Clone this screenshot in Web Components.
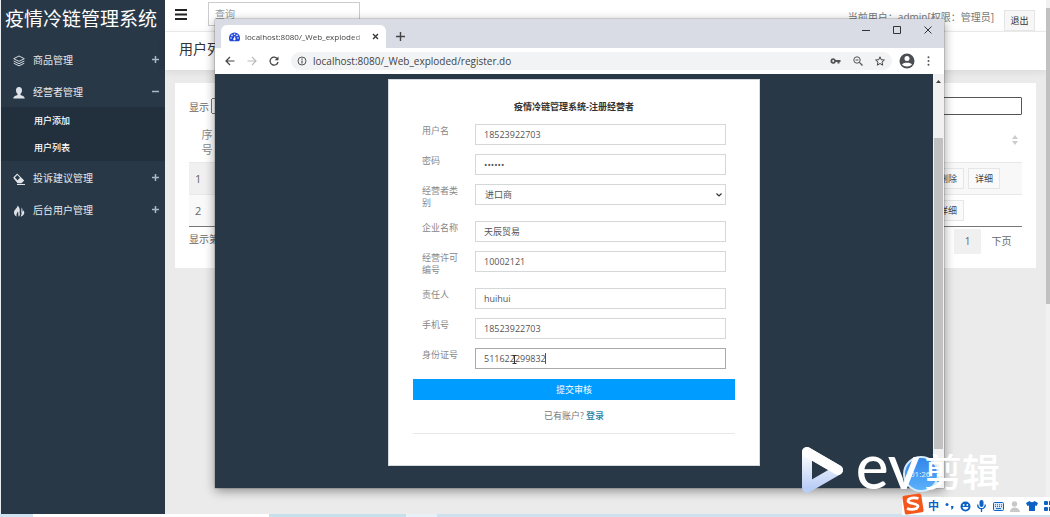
<!DOCTYPE html>
<html lang="zh-CN">
<head>
<meta charset="utf-8">
<title>疫情冷链管理系统</title>
<style>
html,body{margin:0;height:100%}
body{font-family:"Open Sans","Noto Sans CJK SC",sans-serif;font-size:10px;color:#666;overflow:hidden}
</style>
</head>
<body>
<desk-top>
  <admin-app>
    <side-bar slot="side">
      <menu-item label="商品管理" icon="layers"></menu-item>
      <menu-item label="经营者管理" icon="user" open>
        <a-sub label="用户添加"></a-sub>
        <a-sub label="用户列表"></a-sub>
      </menu-item>
      <menu-item label="投诉建议管理" icon="eraser"></menu-item>
      <menu-item label="后台用户管理" icon="fire"></menu-item>
    </side-bar>
    <top-bar></top-bar>
    <page-title>用户列表</page-title>
    <user-table></user-table>
  </admin-app>
  <browser-window slot="float">
    <register-card>
      <form-field label="用户名" value="18523922703"></form-field>
      <form-field label="密码" type="password" value="123456"></form-field>
      <form-field label="经营者类别" type="select" value="进口商"></form-field>
      <form-field label="企业名称" value="天辰贸易"></form-field>
      <form-field label="经营许可编号" value="10002121"></form-field>
      <form-field label="责任人" value="huihui"></form-field>
      <form-field label="手机号" value="18523922703"></form-field>
      <form-field label="身份证号" value="511622299832" active></form-field>
    </register-card>
  </browser-window>
  <ime-bar slot="float"></ime-bar>
  <clock-ball slot="float"></clock-ball>
  <ev-mark slot="float"></ev-mark>
</desk-top>
<script>
const base = ':host,*{box-sizing:border-box}button,input,select{font:inherit;color:inherit;margin:0}a{color:inherit;text-decoration:none}svg{display:block}';
function define(name, html) {
  customElements.define(name, class extends HTMLElement {
    connectedCallback() {
      if (this.shadowRoot) return;
      const root = this.attachShadow({mode: 'open'});
      const markup = typeof html === 'function' ? html(this) : html;
      root.innerHTML = '<style>' + base + '</style>' + markup;
    }
  });
}

define('desk-top', `<style>
:host{display:grid;grid-template-rows:1fr 3px;height:100vh;position:relative;overflow:hidden}
.task{background:linear-gradient(90deg,#cfe3f2 33px,#fff 33px 269px,#c8e0ec 269px 406px,#e6f1f8 406px 437px,#cfe0ee 437px)}
</style><slot></slot><div class="task"></div><slot name="float"></slot>`);

define('admin-app', `<style>
:host{display:grid;grid-template-columns:165px 1fr 4px;background:#ebebeb;min-height:0}
main{min-width:0}
.bar{background:#f1f1f1;padding-top:8px}
.bar i{display:block;height:296px;background:#c1c1c1}
</style><slot name="side"></slot><main><slot></slot></main><div class="bar"><i></i></div>`);

define('side-bar', `<style>
:host{display:block;background:#283847;color:#e4e8ec;border-left:1px solid #e8ecf0}
h1{margin:0;height:43px;line-height:38px;font-size:19px;font-weight:400;color:#fff;padding-left:4px;white-space:nowrap}
</style><h1>疫情冷链管理系统</h1><nav><slot></slot></nav>`);

const menuIcons = {
  layers: '<g fill="none" stroke="#d5dae0" stroke-width="1"><path d="M6 1 11.3 3.7 6 6.4.7 3.7Z"/><path d="M.7 6 6 8.7 11.3 6"/><path d="M.7 8.2 6 10.9 11.3 8.2"/></g>',
  user: '<path fill="#dfe3e7" d="M6 0C3.9 0 3 1.5 3 3.300 3 5 3.700 6.200 4.500 7v1.100C3 8.800.5 9 .3 11.500h11.400C11.500 9 9 8.800 7.500 8.100V7C8.300 6.200 9 5 9 3.300 9 1.500 8.100 0 6 0Z"/>',
  eraser: '<path fill="#dfe3e7" fill-rule="evenodd" d="M4.200.500 11.200 7.500 8.500 10.300H4.600L.500 5.200 .4 4.300ZM4.300 2 1.900 4.500 4.500 7.200 7 4.700Z"/><path fill="#dfe3e7" d="M4 11h8v1H4Z"/>',
  fire: '<path fill="#dfe3e7" d="M4.500.500C4.800 3 1 4.500 1 7.500 1 9.500 2.200 11 3.800 11.500 2.700 9.500 4.200 8.200 4.800 6.500 5.800 8 4.800 9.800 5.800 11.800 7 10.500 7.200 9 6.500 7.300 7.500 5 6.300 2 4.500.500ZM8.600 2.500C8.800 4.500 8 5.200 8.300 6.800 9 9 8.300 10.500 7.300 11.800 10 11 11.500 9.300 11.300 7.300 11 6.300 10.600 5.700 10 5.300 10 6.200 9.800 6.600 9.400 6.900 9.600 5 9.500 3.500 8.600 2.500Z"/>'
};
define('menu-item', el => `<style>
:host{display:block}
a{display:grid;grid-template-columns:12px 1fr 7px;column-gap:8px;align-items:center;height:32px;padding:0 6px 0 12px}
.ic{padding-top:3px}
.sub{background:#22303d}
</style><a href="#"><span class="ic"><svg width="12" height="12" viewBox="0 0 12 12">${menuIcons[el.getAttribute('icon')]}</svg></span><span>${el.getAttribute('label')}</span>
<svg width="7" height="7" viewBox="0 0 7 7"><path d="M0 3.500H7${el.hasAttribute('open') ? '' : 'M3.500 0V7'}" stroke="#a9bac6" stroke-width="1.500"/></svg></a><div class="sub"><slot></slot></div>`);
define('a-sub', el => `<style>:host{display:block}a{display:block;height:27px;line-height:27px;padding-left:33px;font-size:9px;font-weight:500;color:#fff}</style><a href="#">${el.getAttribute('label')}</a>`);

define('top-bar', `<style>
:host{display:flex;align-items:flex-start;height:32px;background:#fff;border-bottom:1px solid #eee;padding:0 11px 0 10px}
.burger{border:0;background:none;padding:9px 0 0;width:12px}
input{margin:2px 0 0 21px;width:152px;height:24px;border:1px solid #ccc;padding:0 6px;background:#fff}
input::placeholder{color:#999}
.who{margin-left:auto;line-height:34px;color:#777;white-space:nowrap}
.out{margin:10px 0 0 10px;width:31px;height:21px;border:1px solid #e5e5e5;background:#f7f7f7;font-size:9px;padding:0;color:#333}
</style>
<button class="burger" aria-label="菜单"><svg width="12" height="11" viewBox="0 0 12 11"><path d="M0 1H12M0 5.500H12M0 10H12" stroke="#222" stroke-width="2"/></svg></button>
<input placeholder="查询" aria-label="查询">
<span class="who">当前用户：admin[权限：管理员]</span><button class="out">退出</button>`);

define('page-title', `<style>
:host{display:block;background:#fff;height:38px;box-shadow:0 2px 8px rgba(0,0,0,.08)}
h2{margin:0;padding-left:14px;font-size:14px;font-weight:400;line-height:34px;color:#333}
</style><h2><slot></slot></h2>`);

define('user-table', `<style>
:host{display:block;margin:13px 10px 0;background:#fff;padding:14px;height:185px}
.tools,.foot{display:flex;justify-content:space-between;align-items:center}
.tools{height:18px}
label{display:flex;align-items:center;gap:2px}
select{width:40px;height:16px;padding:0}
input{width:130px;height:18px;border:1px solid #555;border-radius:1px;background:#fff}
table{width:100%;border-collapse:collapse;table-layout:fixed;margin-top:9px;border-bottom:1px solid #777}
th{height:38px;font-weight:400;font-size:11px;line-height:15px;color:#888;padding:0 12px 2px}
th:first-child{width:36px}th:last-child{width:90px;padding:0 4px 6px}
th svg{margin-left:auto}
td{height:32px;padding:0 6px;border-top:1px solid #e8e8e8;font-size:11px}
td:last-child{padding:0}
tbody tr:first-child{background:#f8f8f8}
tbody tr:first-child td:first-child{background:#f0f0f0}
tbody tr:last-child td:first-child{background:#f9f9f9}
.acts{display:flex;gap:4px}
button{width:32px;height:21px;border:1px solid #e4e6e8;background:#fafafa;font-size:9px;padding:0;color:#444}
.foot{height:30px}
.pages{display:flex}.pages a{width:27px;height:25px;line-height:25px;text-align:center;background:#f0f0f0}
.pages a+a{background:none;width:41px}
.info{line-height:24px;align-self:flex-start}
</style>
<div class="tools"><label>显示<select><option></option></select></label><input aria-label="搜索"></div>
<table><thead><tr><th>序号</th><th></th><th><svg width="6" height="10" viewBox="0 0 6 10"><path fill="#ccc" d="M3 0 6 4H0ZM0 6H6L3 10Z"/></svg></th></tr></thead>
<tbody><tr><td>1</td><td></td><td><div class="acts"><button>删除</button><button>详细</button></div></td></tr>
<tr><td>2</td><td></td><td><div class="acts"><button>详细</button></div></td></tr></tbody></table>
<div class="foot"><span class="info">显示第</span><span class="pages"><a href="#">1</a><a href="#">下页</a></span></div>`);

define('browser-window', `<style>
:host{position:absolute;left:215px;right:106px;top:19px;bottom:29px;display:grid;grid-template-rows:29px 26px 1fr;background:#fff;box-shadow:0 3px 10px rgba(0,0,0,.4),0 0 1px #444}
.tabs{display:flex;background:#d9dce5;padding:6px 12px 0 6px}
.tab{display:flex;align-items:center;width:165px;background:#fff;border-radius:6px 6px 0 0;padding:0 7px 0 8px;font-size:8px;color:#444}
.tab .t{flex:1;margin:0 2px 0 5px;white-space:nowrap;-webkit-mask:linear-gradient(90deg,#000 85%,transparent)}
.tab svg{flex:none}
button{border:0;background:none;padding:0;display:flex;align-items:center}
.plus{margin-left:10px}
.win{margin-left:auto;display:flex;gap:23px;height:10px}
.nav{display:flex;align-items:center;padding:0 14px 0 10px}
.nav>button{margin-right:12px}
.omni{flex:1;min-width:0;display:flex;align-items:center;height:18px;border-radius:9px;background:#f1f3f4;padding:0 7px 0 6px;margin-right:7px}
.omni input{flex:1;min-width:0;border:0;background:none;padding:0 6px;color:#444;outline:0}
.omni .r{display:flex;gap:12px}
.nav>.me{margin-right:12px}.nav>.dots{margin:0}
.view{display:grid;grid-template-columns:1fr 11px;background:#283847;min-height:0}
.page{padding-top:5px}
.sb{background:#f1f1f1;display:grid;grid-template-rows:64px 1fr 39px}
.sb i{background:#c1c1c1;margin:0 1px}
.sb svg{margin:6px auto 0}
.sb svg:last-child{align-self:end;margin-bottom:5px}
</style>
<div class="tabs"><div class="tab">
<svg width="11" height="10" viewBox="0 0 11 10"><path fill="#2348d8" d="M5.500.500A5.400 5.400 0 0 0 0 6 5 5 0 0 0 1 9.300H10A5 5 0 0 0 11 6 5.400 5.400 0 0 0 5.500.500Z"/><g fill="#fff"><circle cx="2" cy="6" r=".8"/><circle cx="3" cy="3.400" r=".8"/><circle cx="5.500" cy="2.300" r=".8"/><circle cx="9" cy="6" r=".8"/><circle cx="8" cy="3.400" r=".8"/><path d="M5 6 6.100 3.600 6.300 6.300A1.200 1.200 0 1 1 5 6Z"/></g></svg>
<span class="t">localhost:8080/_Web_exploded</span>
<button aria-label="关闭标签"><svg width="7" height="7" viewBox="0 0 7 7"><path d="M1 1 6 6M6 1 1 6" stroke="#333" stroke-width="1.300"/></svg></button></div>
<button class="plus" aria-label="新标签"><svg width="9" height="9" viewBox="0 0 9 9"><path d="M0 4.500H9M4.500 0V9" stroke="#444" stroke-width="1.400"/></svg></button>
<div class="win"><button aria-label="最小化"><svg width="8" height="8" viewBox="0 0 8 8"><path d="M0 4.500H8" stroke="#333"/></svg></button><button aria-label="最大化"><svg width="8" height="8" viewBox="0 0 8 8"><path d="M.5.500H7.500V7.500H.5Z" fill="none" stroke="#333"/></svg></button><button aria-label="关闭"><svg width="8" height="8" viewBox="0 0 8 8"><path d="M.5.500 7.500 7.500M7.500.500.5 7.500" stroke="#333"/></svg></button></div></div>
<div class="nav">
<button aria-label="后退"><svg width="10" height="10" viewBox="0 0 10 10"><path d="M9.500 5H1M5 1 1 5 5 9" fill="none" stroke="#444" stroke-width="1.200"/></svg></button>
<button aria-label="前进"><svg width="10" height="10" viewBox="0 0 10 10"><path d="M.5 5H9M5 1 9 5 5 9" fill="none" stroke="#bbb" stroke-width="1.200"/></svg></button>
<button aria-label="刷新"><svg width="10" height="10" viewBox="0 0 10 10"><path d="M8.500 3A4 4 0 1 0 9 6" fill="none" stroke="#444" stroke-width="1.300"/><path d="M9.500.500V4.300H5.700Z" fill="#444"/></svg></button>
<div class="omni"><svg width="10" height="10" viewBox="0 0 10 10"><circle cx="5" cy="5" r="4" fill="none" stroke="#555"/><path d="M5 4.500V7.400M5 2.600V3.700" stroke="#555" stroke-width="1.200"/></svg>
<input aria-label="地址" value="localhost:8080/_Web_exploded/register.do">
<span class="r"><svg width="11" height="10" viewBox="0 0 11 10"><path fill="#555" fill-rule="evenodd" d="M3.200 2.200A2.800 2.800 0 1 0 5.800 6H7.500V7.500H9.500V6H10.500V4H5.800A2.800 2.800 0 0 0 3.200 2.200ZM3.200 4A1 1 0 1 1 3.200 6 1 1 0 0 1 3.200 4Z"/></svg>
<svg width="10" height="10" viewBox="0 0 10 10"><circle cx="4" cy="4" r="3.200" fill="none" stroke="#555"/><path d="M6.400 6.400 9.500 9.500" stroke="#555" stroke-width="1.300"/><path d="M2.500 4H5.500" stroke="#555"/></svg>
<svg width="10" height="10" viewBox="0 0 10 10"><path d="M5 .8 6.200 3.700 9.400 4 7 6.100 7.700 9.200 5 7.500 2.300 9.200 3 6.100.6 4 3.800 3.700Z" fill="none" stroke="#444"/></svg></span></div>
<button class="me" aria-label="账户"><svg width="16" height="16" viewBox="0 0 16 16"><circle cx="8" cy="8" r="7.500" fill="#4b4f54"/><circle cx="8" cy="5.500" r="2.500" fill="#fff"/><path d="M3 11.500C4 9 12 9 13 11.500 11 14 5 14 3 11.500Z" fill="#fff"/></svg></button>
<button class="dots" aria-label="更多"><svg width="3" height="10" viewBox="0 0 3 10"><g fill="#555"><circle cx="1.500" cy="1.200" r="1"/><circle cx="1.500" cy="5" r="1"/><circle cx="1.500" cy="8.800" r="1"/></g></svg></button>
</div>
<div class="view"><div class="page"><slot></slot></div><div class="sb"><svg width="5" height="3" viewBox="0 0 5 3"><path d="M2.500 0 5 3H0Z" fill="#444"/></svg><i></i><svg width="5" height="3" viewBox="0 0 5 3"><path d="M0 0H5L2.500 3Z" fill="#444"/></svg></div></div>`);

define('register-card', `<style>
:host{display:block;width:372px;margin:0 auto;background:#fff;padding:18px 24px 31px;border:1px solid #d4dade;font-size:9px}
h3{margin:0 0 8px;text-align:center;font-size:9px;font-weight:700;line-height:18px;color:#333}
form{margin:0}
.f{display:grid;row-gap:9px;padding:0 9px;margin-bottom:10px}
.go{display:block;width:100%;height:21px;border:0;background:#009cff;color:#fff;padding:0}
p{margin:9px 0 10px;text-align:center;line-height:14px;color:#777}
p a{color:#2a7ea5;font-weight:500}
hr{border:0;border-top:1px solid #e8e8e8;margin:0}
</style><h3>疫情冷链管理系统-注册经营者</h3><form onsubmit="return false"><div class="f"><slot></slot></div><button class="go">提交审核</button></form><p>已有账户? <a href="#">登录</a></p><hr>`);

define('form-field', el => {
  const type = el.getAttribute('type') || 'text', value = el.getAttribute('value');
  const control = type === 'select'
    ? `<select id="c"><option>${value}</option></select><svg class="arrow" width="6" height="4" viewBox="0 0 6 4"><path d="M.5.500 3 3 5.500.500" fill="none" stroke="#333" stroke-width="1.200"/></svg>`
    : `<input id="c" type="${type}" value="${value}">`;
  const pointer = el.hasAttribute('active')
    ? '<i class="caret"></i><svg class="beam" width="5" height="9" viewBox="0 0 5 9"><path d="M.5.500H4.500M2.500.500V8.500M.5 8.500H4.500" stroke="#333" fill="none"/></svg>' : '';
  return `<style>
:host{display:grid;grid-template-columns:38px 1fr;column-gap:15px;align-items:start}
label{line-height:12px;padding:1px 0 3px;color:#888}
.box{position:relative;display:grid}
input,select{width:100%;height:21px;border:1px solid #d5d8d9;border-radius:0;background:#fff;padding:0 8px;color:#555;outline:0}
select{appearance:none;padding-left:9px}
:host([active]) input{border-color:#aaa}
.arrow{position:absolute;right:4px;top:9px}
.caret{position:absolute;left:70px;top:5px;width:1px;height:11px;background:#555}
.beam{position:absolute;left:37px;top:7px}
</style><label for="c">${el.getAttribute('label')}</label><div class="box">${control}${pointer}</div>`;
});

define('ime-bar', `<style>
:host{position:absolute;right:0;bottom:2px;display:flex;align-items:center;height:18px;width:148px;background:#fff;color:#0b62c4}
.row{display:flex;flex:1;align-items:center;justify-content:space-between;padding-left:4px;font-size:11px;font-weight:700;line-height:18px}
.s{margin-top:-4px}
</style><svg class="s" width="22" height="22" viewBox="0 0 22 22"><rect x="1.500" y="1.500" width="19" height="19" rx="2" fill="#f4571c" transform="rotate(-9 11 11)"/><path d="M16.500 5.500C12 4 6 5.200 6 8 6 11 16 10 16 13.300 16 16.500 9 17 5 15.500" fill="none" stroke="#fff" stroke-width="2.800"/></svg>
<div class="row"><span>中</span>
<svg width="9" height="8" viewBox="0 0 9 8"><circle cx="2" cy="2.500" r="1.500" fill="#0b62c4"/><path d="M6 4H8.500C8.500 6 8 7 6 8 7 6.500 6 6 6 4Z" fill="#0b62c4"/></svg>
<svg width="11" height="11" viewBox="0 0 11 11"><circle cx="5.500" cy="5.500" r="5" fill="#0b62c4"/><circle cx="3.700" cy="4" r=".9" fill="#fff"/><circle cx="7.300" cy="4" r=".9" fill="#fff"/><path d="M2.500 6H8.500C8 9.500 3 9.500 2.500 6Z" fill="#fff"/></svg>
<svg width="9" height="12" viewBox="0 0 9 12"><rect x="2.500" width="4" height="7" rx="2" fill="#0b62c4"/><path d="M.7 4.500C.7 10 8.300 10 8.300 4.500M4.500 8.500V12" fill="none" stroke="#0b62c4" stroke-width="1.300"/></svg>
<svg width="11" height="9" viewBox="0 0 11 9"><rect x=".5" y=".5" width="10" height="8" rx="1" fill="#dcecfb" stroke="#0b62c4"/><path d="M2 2.800H9M2 4.600H9" stroke="#0b62c4" stroke-dasharray="1 1"/><path d="M3 6.600H8" stroke="#0b62c4"/></svg>
<svg width="10" height="11" viewBox="0 0 10 11"><circle cx="4.500" cy="3" r="2.700" fill="#c8c8c8"/><path d="M0 11C0 5 9 5 10 11Z" fill="#c8c8c8"/></svg>
<svg width="12" height="10" viewBox="0 0 12 10"><path d="M3.500 0C4.500 1.500 7.500 1.500 8.500 0L12 2 10.500 5 9 4.500V10H3V4.500L1.500 5 0 2Z" fill="#0b62c4"/></svg>
<svg width="6" height="10" viewBox="0 0 6 10"><rect y="0" width="4" height="4" rx="1" fill="#0b62c4"/><rect y="6" width="4" height="4" rx="1" fill="#0b62c4"/><path d="M5 0H6V4H5ZM5 6H6V10H5Z" fill="#0b62c4"/></svg></div>`);

define('clock-ball', `<style>
:host{position:absolute;right:111px;bottom:25px;width:36px;height:36px;border-radius:50%;border:2px solid #d4e9fb;background:linear-gradient(#3386ea,#5ab1fa);color:#e9f4ff;font-size:8px;line-height:32px;padding-left:5px}
</style>01:26`);

define('ev-mark', `<style>
:host{position:absolute;right:50px;bottom:17px;height:60px;display:flex;align-items:center;color:#fff}
.ev{font:500 62px/60px Lato,sans-serif;margin:-10px 4px 0 12px}
.cn{font:500 38px/60px "Noto Sans CJK SC",sans-serif}
</style><svg width="42" height="48" viewBox="0 0 42 48"><defs><linearGradient id="g" x2="0" y2="1"><stop stop-color="#fff"/><stop offset="1" stop-color="#b9cdf5"/></linearGradient></defs><path d="M5 6V42L36 24Z" fill="none" stroke="url(#g)" stroke-width="10" stroke-linejoin="round"/><path d="M5 6 36 24" stroke="#fff" stroke-width="10" stroke-linecap="round"/></svg><span class="ev">ev</span><span class="cn">剪辑</span>`);
</script>
</body>
</html>
